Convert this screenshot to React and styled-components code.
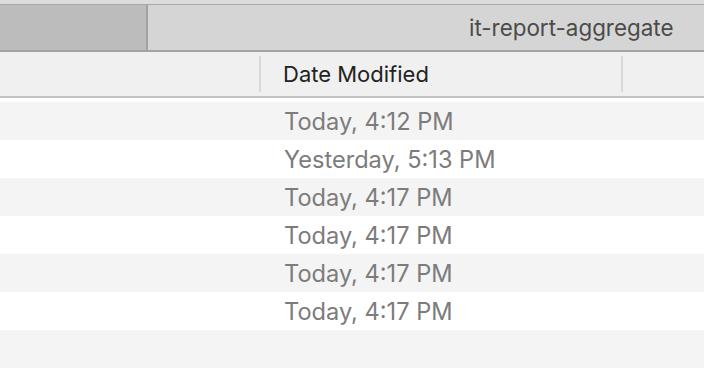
import React from 'react'
import styled, { createGlobalStyle } from 'styled-components'

const GlobalStyle = createGlobalStyle`
  html, body {
    margin: 0;
    padding: 0;
    background: #ffffff;
    overflow: hidden;
  }
  body {
    font-family: Inter, "Liberation Sans", Arial, sans-serif;
    -webkit-font-smoothing: antialiased;
  }
`

const Window = styled.div`
  width: 704px;
  height: 370px;
  display: flex;
  flex-direction: column;
  background: #ffffff;
  overflow: hidden;
`

const TopEdge = styled.div`
  height: 4px;
  background: #dcdcdc;
  border-bottom: 1px solid #a9a9a9;
  flex-shrink: 0;
`

const TabBar = styled.div`
  display: flex;
  height: 45px;
  border-bottom: 2px solid #a3a3a3;
  flex-shrink: 0;
`

const Tab = styled.div`
  display: flex;
  align-items: center;
  background: ${p => (p.$active ? '#d5d5d5' : '#bcbcbc')};
  width: ${p => (p.$active ? 'auto' : '146px')};
  flex: ${p => (p.$active ? '1' : 'none')};
  border-right: ${p => (p.$active ? 'none' : '2px solid #a2a2a2')};
  padding-left: ${p => (p.$active ? '321px' : '0')};
  color: #4b4b4b;
  font-size: 22.4px;
  white-space: nowrap;
`

const Header = styled.div`
  display: flex;
  align-items: center;
  height: 44px;
  background: #f0f0f0;
  border-bottom: 2px solid #c2c2c2;
  flex-shrink: 0;
`

const HeaderCell = styled.div`
  display: flex;
  align-items: center;
  height: 36px;
  width: ${p => p.$width}px;
  padding-left: ${p => p.$pad || 0}px;
  box-sizing: border-box;
  border-left: ${p => (p.$divider ? '2px solid #d9d9d9' : 'none')};
  color: #222222;
  font-size: 22px;
  flex-shrink: 0;
`

const Gap = styled.div`
  height: 4px;
  background: #ffffff;
  flex-shrink: 0;
`

const Row = styled.div`
  display: flex;
  align-items: center;
  height: 38px;
  background: ${p => (p.$striped ? '#f4f4f4' : '#ffffff')};
  flex-shrink: 0;
`

const DateCell = styled.div`
  padding-left: 284px;
  color: #7c7c7c;
  font-size: 23.6px;
  white-space: nowrap;
`

const dates = [
  'Today, 4:12 PM',
  'Yesterday, 5:13 PM',
  'Today, 4:17 PM',
  'Today, 4:17 PM',
  'Today, 4:17 PM',
  'Today, 4:17 PM',
  '',
  '',
]

const App = () => {
  return (
    <Window>
      <GlobalStyle />
      <TopEdge />
      <TabBar>
        <Tab />
        <Tab $active>it-report-aggregate</Tab>
      </TabBar>
      <Header>
        <HeaderCell $width={259} />
        <HeaderCell $width={362} $pad={22} $divider>Date Modified</HeaderCell>
        <HeaderCell $width={83} $divider />
      </Header>
      <Gap />
      {dates.map((d, i) => (
        <Row key={i} $striped={i % 2 === 0}>
          <DateCell>{d}</DateCell>
        </Row>
      ))}
    </Window>
  )
}

export default App
